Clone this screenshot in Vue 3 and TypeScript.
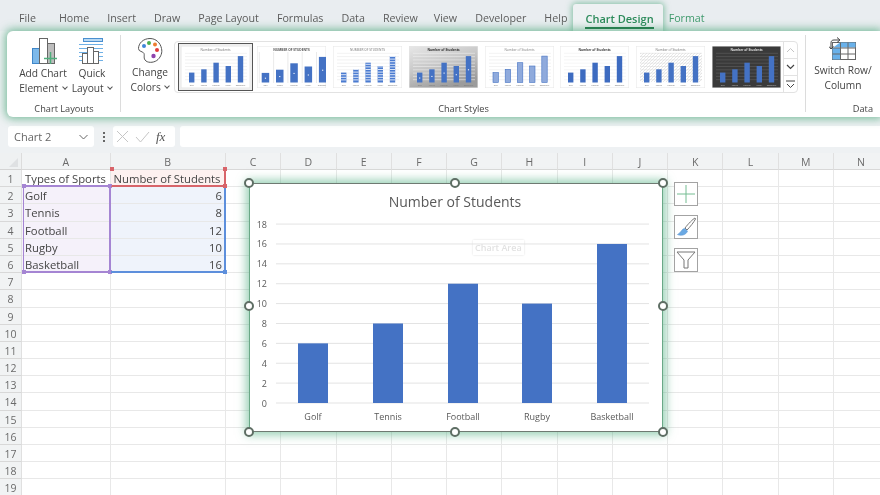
<script setup lang="ts">
interface Thumb { id: string; bg: string; grid: string; bar: string; title: string; weight: number; titleColor: string; barStroke?: string; hatch?: boolean; label?: string; vertical?: boolean; stripe?: boolean; }

const tabs = ['File', 'Home', 'Insert', 'Draw', 'Page Layout', 'Formulas', 'Data', 'Review', 'View', 'Developer', 'Help'];
const letters = ['A', 'B', 'C', 'D', 'E', 'F', 'G', 'H', 'I', 'J', 'K', 'L', 'M', 'N'];
const rows = Array.from({ length: 19 }, (_, i) => i + 1);
const table: Record<string, string> = {
  A1: 'Types of Sports', B1: 'Number of Students',
  A2: 'Golf', B2: '6', A3: 'Tennis', B3: '8', A4: 'Football', B4: '12', A5: 'Rugby', B5: '10', A6: 'Basketball', B6: '16',
};
const values = [6, 8, 12, 10, 16];
const names = ['Golf', 'Tennis', 'Football', 'Rugby', 'Basketball'];
const ticks = [0, 2, 4, 6, 8, 10, 12, 14, 16, 18];
const barX = [49, 124, 199, 273, 348];
const barCenters = [64, 139, 214, 288, 363];
const yOf = (v: number) => 220 - v * 9.94;

const thumbs: Thumb[] = [
  { id: 's1', bg: '#fff', grid: '#e4e4e4', bar: '#4472c4', title: 'Number of Students', weight: 400, titleColor: '#777' },
  { id: 's2', bg: '#fff', grid: '#d4d4d4', bar: '#4472c4', title: 'NUMBER OF STUDENTS', weight: 700, titleColor: '#555', vertical: true, label: '#fff' },
  { id: 's3', bg: '#fff', grid: '#e4e4e4', bar: '#4a7bd0', title: 'NUMBER OF STUDENTS', weight: 400, titleColor: '#777', stripe: true },
  { id: 's4', bg: 'url(#silver)', grid: '#f4f4f4', bar: '#4472c4', title: 'Number of Students', weight: 700, titleColor: '#333', label: '#fff' },
  { id: 's5', bg: '#fff', grid: '#e4e4e4', bar: '#8faadc', barStroke: '#4472c4', title: 'Number of Students', weight: 400, titleColor: '#888' },
  { id: 's6', bg: '#fff', grid: '#ececec', bar: '#3d6bc0', title: 'Number of Students', weight: 700, titleColor: '#444' },
  { id: 's7', bg: '#fff', grid: '#d8d8d8', bar: '#4472c4', title: 'Number of Students', weight: 400, titleColor: '#777', hatch: true },
  { id: 's8', bg: '#3a3a3a', grid: '#666', bar: '#4472c4', title: 'Number of Students', weight: 700, titleColor: '#ddd' },
];
const barsFor = (t: Thumb) =>
  values.map((v, i) =>
    t.vertical
      ? { x: 4.7 + i * 14.3, w: 7.5, h: v * 1.6 }
      : { x: 8 + i * 12.2, w: 5.4, h: v * 1.65 },
  );
</script>

<template>
  <div class="app">
    <nav class="tabs">
      <span v-for="t in tabs" :key="t" class="tab">{{ t }}</span>
      <span class="tab active">Chart Design</span>
      <span class="tab context">Format</span>
    </nav>

    <section class="ribbon">
      <div class="group layouts">
        <div class="tools">
          <div class="tool add">
            <svg width="30" height="28" viewBox="0 0 30 28">
              <rect x="1.5" y="11.5" width="8" height="15" fill="#7db9ea" stroke="#3f86c8" />
              <rect x="8.5" y="1.5" width="8" height="25" fill="#fff" stroke="#666" />
              <rect x="16.5" y="6.5" width="7" height="20" fill="#bdbdbd" stroke="#666" />
              <path d="M19.5 15v12M13 21.5h13" stroke="#4fae7c" stroke-width="1.5" fill="none" />
            </svg>
            <span class="label">Add Chart<br />Element <i class="caret"></i></span>
          </div>
          <div class="tool quick">
            <svg width="28" height="28" viewBox="0 0 28 28">
              <rect x="5.5" y="1.5" width="19" height="3" fill="#b9d9f3" stroke="#4a8fd0" />
              <path d="M1 7.5h24M1 11.5h24M1 15.5h24M1 19.5h24M1 23.5h24" stroke="#6fb0e6" />
              <rect x="4.5" y="16.5" width="5" height="10" fill="#fff" stroke="#666" />
              <rect x="9.5" y="10.5" width="6" height="16" fill="#fff" stroke="#666" />
              <rect x="15.5" y="14.5" width="5" height="12" fill="#fff" stroke="#666" />
            </svg>
            <span class="label">Quick<br />Layout <i class="caret"></i></span>
          </div>
        </div>
        <div class="group-name">Chart Layouts</div>
      </div>

      <div class="group styles">
        <div class="tools">
          <div class="tool colors">
            <svg width="27" height="27" viewBox="0 0 27 27">
              <path d="M13 1.5C6 1.5 1.5 6.5 1.5 11.5c0 3.5 4.5 2.5 5.5 5 .8 2.2-1 5 2 7.5 3 2.3 9 1.5 12-1.5 3-3 4.500-7 3.500-11C23.500 6 19 1.500 13 1.500z" fill="#fff" stroke="#555" />
              <circle cx="7" cy="9" r="2" fill="#3f86d8" />
              <circle cx="12" cy="6" r="2" fill="#4caf50" />
              <circle cx="18" cy="7.500" r="2" fill="#ed7d31" />
              <circle cx="20" cy="13" r="2" fill="#e03a3a" />
              <circle cx="16.500" cy="19" r="2.200" fill="#8e44ad" />
            </svg>
            <span class="label">Change<br />Colors <i class="caret"></i></span>
          </div>
          <div class="gallery">
            <div class="thumbs">
              <svg v-for="(t, n) in thumbs" :key="t.id" class="thumb" :class="{ picked: n === 0 }" width="69" height="42" viewBox="0 0 69 42">
                <defs>
                  <linearGradient id="silver" x1="0" y1="0" x2="0.5" y2="1">
                    <stop offset="0" stop-color="#e8e8e8" />
                    <stop offset="0.5" stop-color="#c8c8c8" />
                    <stop offset="1" stop-color="#9c9c9c" />
                  </linearGradient>
                  <pattern id="hatch" width="3" height="3" patternUnits="userSpaceOnUse">
                    <path d="M0 3L3 0" stroke="#d8d8d8" stroke-width="0.6" />
                  </pattern>
                </defs>
                <rect x="0" y="0" width="69" height="42" :fill="t.bg" stroke="#e6e6e6" />
                <rect v-if="t.hatch" x="4" y="7" width="62" height="29" fill="url(#hatch)" />
                <text x="34.500" y="5" class="thumb-title" :fill="t.titleColor" :font-weight="t.weight">{{ t.title }}</text>
                <template v-if="!t.vertical">
                  <path v-for="k in 9" :key="k" :d="`M4 ${4 + k * 3.300}H66`" :stroke="t.grid" stroke-width="0.5" />
                </template>
                <template v-else>
                  <path v-for="k in 6" :key="k" :d="`M${-12 + k * 14.300} 6V37`" :stroke="t.grid" stroke-width="0.5" />
                </template>
                <g v-for="(b, i) in barsFor(t)" :key="i">
                  <rect :x="b.x" :y="36.500 - b.h" :width="b.w" :height="b.h" :fill="t.bar" :stroke="t.barStroke" stroke-width="0.6" />
                  <template v-if="t.stripe">
                    <path v-for="k in Math.floor(b.h / 2.600)" :key="k" :d="`M${b.x} ${36.500 - k * 2.600}h${b.w}`" stroke="#dce6f7" stroke-width="1" />
                  </template>
                  <rect v-if="t.label" :x="b.x + b.w / 2 - 0.600" :y="36.500 - b.h / 2" width="1.200" height="1" :fill="t.label" />
                  <text :x="b.x + b.w / 2" y="40" class="thumb-cat" :fill="t.id === 's8' ? '#bbb' : '#777'">{{ names[i] }}</text>
                </g>
              </svg>
            </div>
            <div class="spin">
              <span class="spin-btn"><svg width="9" height="6" viewBox="0 0 9 6"><path d="M1 5l3.500-3.500L8 5" fill="none" stroke="#c4c4c4" /></svg></span>
              <span class="spin-btn"><svg width="9" height="6" viewBox="0 0 9 6"><path d="M1 1l3.500 3.500L8 1" fill="none" stroke="#444" stroke-width="1.200" /></svg></span>
              <span class="spin-btn"><svg width="9" height="9" viewBox="0 0 9 9"><path d="M0 1h9M1 4l3.500 3.500L8 4" fill="none" stroke="#444" /></svg></span>
            </div>
          </div>
        </div>
        <div class="group-name">Chart Styles</div>
      </div>

      <div class="group data">
        <div class="tools">
          <div class="tool switch">
            <svg width="28" height="26" viewBox="0 0 28 26">
              <rect x="3.500" y="6.500" width="23" height="17" fill="#fff" stroke="#666" />
              <path d="M11 6.500h15.500v5H3.500V12z" fill="#69b1ea" />
              <rect x="3.500" y="12" width="8" height="6" fill="#69b1ea" />
              <rect x="3.500" y="18" width="8" height="5.500" fill="#69b1ea" />
              <path d="M3.500 12h23M3.500 18h23M11.500 6.500v17M19 6.500v17" stroke="#666" fill="none" />
              <path d="M2 13V7c0-2 1-3 3-3h5" fill="none" stroke="#444" />
              <path d="M8 1.500L11 4 8 6.500M0 10.500l2 2.500 2.500-2.500" fill="none" stroke="#444" />
            </svg>
            <span class="label">Switch Row/<br />Column</span>
          </div>
        </div>
        <div class="group-name right">Data</div>
      </div>
    </section>

    <div class="formula">
      <div class="namebox">
        <span>Chart 2</span>
        <svg width="9" height="6" viewBox="0 0 9 6"><path d="M.5 1l4 4 4-4" fill="none" stroke="#666" /></svg>
      </div>
      <span class="dots"></span>
      <div class="fxbox">
        <svg width="13" height="13" viewBox="0 0 13 13"><path d="M1 1l11 11M12 1L1 12" stroke="#c6c6c6" fill="none" /></svg>
        <svg width="15" height="12" viewBox="0 0 15 12"><path d="M1 6l4.500 5L14 1" stroke="#c6c6c6" fill="none" /></svg>
        <em>fx</em>
      </div>
      <div class="input"></div>
    </div>

    <div class="sheet">
      <div class="grid">
        <div class="corner" style="grid-row: 1; grid-column: 1"><i></i></div>
        <div v-for="(l, c) in letters" :key="l" class="col-head" :style="{ gridRow: 1, gridColumn: c + 2 }">{{ l }}</div>
        <template v-for="r in rows" :key="r">
          <div class="row-head" :style="{ gridRow: r + 1, gridColumn: 1 }">{{ r }}</div>
          <div
            v-for="(l, c) in letters"
            :key="l"
            class="cell"
            :class="{
              num: l === 'B' && r > 1,
              purple: l === 'A' && r > 1 && r < 7,
              blue: l === 'B' && r > 1 && r < 7,
              red: l === 'B' && r === 1,
            }"
            :style="{ gridRow: r + 1, gridColumn: c + 2 }"
          >{{ table[l + r] }}</div>
        </template>
        <div class="range range-a"><i class="knob tl"></i><i class="knob bl"></i><i class="knob tr"></i><i class="knob br"></i></div>
        <div class="range range-b"><i class="knob br"></i></div>
        <div class="range range-c"><i class="knob tl"></i><i class="knob tr"></i><i class="knob br"></i></div>
      </div>

      <div class="chart">
        <svg class="plot" width="414" height="249" viewBox="0 0 414 249">
          <text x="206" y="24" class="chart-title">Number of Students</text>
          <g v-for="t in ticks" :key="t">
            <path :d="`M27 ${yOf(t)}H400`" stroke="#e3e3e3" stroke-width="1" />
            <text x="18" :y="yOf(t) + 3.500" class="tick">{{ t }}</text>
          </g>
          <rect v-for="(v, i) in values" :key="i" :x="barX[i]" :y="yOf(v)" width="30" :height="v * 9.94" fill="#4472c4" />
          <text v-for="(n, i) in names" :key="n" :x="barCenters[i]" y="237" class="cat">{{ n }}</text>
        </svg>
        <div class="ghost">Chart Area</div>
        <i class="handle h1"></i><i class="handle h2"></i><i class="handle h3"></i><i class="handle h4"></i>
        <i class="handle h5"></i><i class="handle h6"></i><i class="handle h7"></i><i class="handle h8"></i>
      </div>

      <div class="float-tools">
        <span class="float">
          <svg width="22" height="22" viewBox="0 0 22 22"><path d="M11 2v18M2 11h18" stroke="#74bd92" stroke-width="1" fill="none" /></svg>
        </span>
        <span class="float">
          <svg width="22" height="22" viewBox="0 0 22 22">
            <path d="M20 2c-2 1-7 6-10 10l2 2c3-3 7-8 8.500-11z" fill="#fff" stroke="#777" />
            <path d="M9.500 12.500c-3 .5-3 4-7 6 3 1.500 8.500 1 10-3.500z" fill="#6aa9e4" stroke="#5b96d0" stroke-width=".6" />
          </svg>
        </span>
        <span class="float">
          <svg width="22" height="22" viewBox="0 0 22 22"><path d="M2 3h18l-7 8v8H9v-8z" fill="#fff" stroke="#777" /></svg>
        </span>
      </div>
    </div>
  </div>
</template>

<style>
html, body { margin: 0; background: #fff; }
</style>

<style scoped>
.app {
  width: 880px;
  height: 495px;
  overflow: hidden;
  position: relative;
  display: flex;
  flex-direction: column;
  background: #eef1f3;
  font-family: "Open Sans", "Noto Sans", sans-serif;
  color: #444;
  filter: blur(0.4px);
}
.tabs {
  height: 31px;
  flex: none;
  box-sizing: border-box;
  display: flex;
  align-items: flex-start;
  padding: 4px 0 0 10px;
  background: #e9edf0;
  font-size: 10.7px;
  color: #5c5c5c;
}
.tab { padding: 7px 9px 0; height: 27px; box-sizing: border-box; line-height: 15px; white-space: nowrap; }
.tab:first-child { margin-right: 5px; }
.tab:nth-child(8) { margin-right: -2px; }
.tab.active {
  margin-left: -3px;
  padding: 7px 9px 0 12px;
  font-size: 11px;
  font-weight: 600;
  color: #2b8a5a;
  background: #eef1f3;
  box-shadow: 0 0 6px 1px rgba(60, 160, 110, 0.6);
  border-radius: 3px 3px 0 0;
  position: relative;
}
.tab.active::after {
  content: "";
  position: absolute;
  left: 12px;
  right: 9px;
  bottom: 2px;
  height: 2px;
  background: #217346;
}
.tab.context { color: #3f9a6c; margin-left: -3px; }
.ribbon {
  height: 86px;
  flex: none;
  margin-left: 7px;
  display: flex;
  background: #fff;
  border-radius: 6px 0 0 6px;
  box-shadow: 0 0 8px 2px rgba(60, 160, 110, 0.65);
  position: relative;
}
.group { display: flex; flex-direction: column; height: 100%; position: relative; }
.group::after {
  content: "";
  position: absolute;
  right: 0;
  top: 4px;
  bottom: 5px;
  width: 1px;
  background: #dcdcdc;
}
.group.data::after { display: none; }
.layouts { width: 114px; }
.styles { width: 685px; }
.data { width: 74px; }
.tools { flex: 1; display: flex; align-items: flex-start; min-height: 0; }
.tool { display: flex; flex-direction: column; align-items: center; padding-top: 6px; }
.tool svg { flex: none; }
.label {
  font-size: 10.2px;
  line-height: 15px;
  text-align: center;
  color: #444;
  margin-top: 1px;
  white-space: nowrap;
}
.add { width: 68px; margin-left: 2px; }
.add svg { margin-left: 5px; }
.quick { width: 36px; margin-left: -3px; }
.colors { width: 52px; margin-left: 3px; }
.colors svg { margin-left: 1px; }
.caret {
  display: inline-block;
  width: 3px;
  height: 3px;
  border-right: 1px solid #555;
  border-bottom: 1px solid #555;
  transform: rotate(45deg);
  margin: 0 0 3px 2px;
}
.group-name {
  font-size: 9.2px;
  line-height: 14px;
  text-align: center;
  padding-bottom: 1px;
  color: #444;
}
.group-name.right { text-align: right; padding-right: 7px; }
.gallery {
  margin-top: 10px;
  height: 50px;
  display: flex;
  margin-left: -2px;
  border: 1px solid #e2e2e2;
  border-radius: 4px;
  box-sizing: content-box;
}
.thumbs { display: flex; gap: 6.9px; width: 608px; padding: 4px 0 0 6px; box-sizing: border-box; height: 100%; }
.thumb { flex: none; }
.thumb.picked { outline: 1px solid #555; outline-offset: 2px; box-shadow: 0 0 0 3px #eee; }
.thumb-title { font-size: 3.2px; text-anchor: middle; }
.thumb-cat { font-size: 2px; text-anchor: middle; }
.spin {
  width: 13px;
  display: flex;
  flex-direction: column;
  border-left: 1px solid #e2e2e2;
}
.spin-btn { flex: 1; display: flex; align-items: center; justify-content: center; border-bottom: 1px solid #e2e2e2; }
.spin-btn:last-child { border-bottom: 0; }
.switch { width: 76px; padding-top: 5px; }
.formula {
  height: 36px;
  flex: none;
  box-sizing: border-box;
  display: flex;
  align-items: center;
  padding: 3px 0 0 8px;
}
.namebox {
  width: 86px;
  height: 21px;
  box-sizing: border-box;
  background: #fff;
  border-radius: 3px;
  display: flex;
  align-items: center;
  justify-content: space-between;
  padding: 0 6px;
  font-size: 11px;
  color: #666;
}
.dots {
  width: 2px;
  height: 2px;
  background: #666;
  margin: 0 8px 0 9px;
  box-shadow: 0 -4px 0 #666, 0 4px 0 #666;
}
.fxbox {
  width: 62px;
  height: 21px;
  box-sizing: border-box;
  background: #fff;
  border-radius: 3px;
  display: flex;
  align-items: center;
  gap: 6px;
  padding: 0 3px;
}
.fxbox em { font-family: "Liberation Serif", serif; font-size: 13px; color: #555; }
.input { flex: 1; height: 21px; background: #fff; border-radius: 3px 0 0 3px; margin-left: 5px; }
.sheet { flex: 1; position: relative; background: #fff; }
.grid {
  display: grid;
  grid-template-columns: 22px 88.5px 115.5px repeat(12, 55.25px);
  grid-template-rows: 17px repeat(19, 17.2px);
}
.corner { background: #eff1f2; border-right: 1px solid #dcdcdc; border-bottom: 1px solid #d4d4d4; position: relative; box-sizing: border-box; }
.corner i {
  position: absolute;
  right: 3px;
  bottom: 2px;
  border-left: 9px solid transparent;
  border-bottom: 9px solid #dfe1e3;
}
.col-head, .row-head {
  background: #f1f3f4;
  color: #6a6a6a;
  font-size: 10.5px;
  text-align: center;
  box-sizing: border-box;
  line-height: 18px;
  border-right: 1px solid #e0e0e0;
  border-bottom: 1px solid #d8d8d8;
}
.cell {
  box-sizing: border-box;
  border-right: 1px solid #e8e8e8;
  border-bottom: 1px solid #e8e8e8;
  font-size: 11.3px;
  line-height: 18px;
  padding: 0 3px;
  color: #454545;
  white-space: nowrap;
  overflow: hidden;
}
.cell.num { text-align: right; }
.cell.purple { background: #f5f1fa; }
.cell.blue { background: #eff3fb; }
.cell.red { background: #fdf1f0; }
.range { box-sizing: border-box; position: relative; z-index: 1; }
.range-a {
  grid-column: 2;
  grid-row: 3 / 8;
  border-left: 1px solid #a585d3;
  border-right: 2px solid #a585d3;
  border-top: 2px solid #a585d3;
  border-bottom: 2px solid #a585d3;
  margin-top: -2px;
  margin-left: 1px;
}
.range-b {
  grid-column: 3;
  grid-row: 3 / 8;
  border-right: 2px solid #5d8fdc;
  border-bottom: 2px solid #5d8fdc;
  margin-top: -1px;
}
.range-c {
  grid-column: 3;
  grid-row: 2;
  border-left: 1px solid transparent;
  border-right: 2px solid #d8646a;
  border-bottom: 2px solid #d8646a;
}
.knob { position: absolute; width: 4px; height: 4px; }
.range-a .knob { background: #a585d3; }
.range-b .knob { background: #5d8fdc; }
.range-c .knob { background: #d8646a; }
.knob.tl { left: -2px; top: -3px; }
.knob.tr { right: -3px; top: -3px; }
.knob.bl { left: -2px; bottom: -3px; }
.knob.br { right: -3px; bottom: -3px; }
.chart {
  position: absolute;
  left: 249px;
  top: 30px;
  width: 414px;
  height: 249px;
  box-sizing: border-box;
  background: #fff;
  border-top: 1.5px solid #6e7a72;
  border-bottom: 1.5px solid #6e7a72;
  border-left: 1.5px solid #6aa887;
  border-right: 1.5px solid #6aa887;
  box-shadow: 0 0 9px 3px rgba(70, 170, 120, 0.55);
}
.plot { position: absolute; left: -1.5px; top: -1.5px; }
.chart-title { font-size: 14px; fill: #595959; text-anchor: middle; }
.tick { font-size: 9px; fill: #595959; text-anchor: end; }
.cat { font-size: 9px; fill: #595959; text-anchor: middle; }
.ghost {
  position: absolute;
  left: 223px;
  top: 56px;
  padding: 1px 2px;
  font-size: 9px;
  line-height: 13px;
  font-weight: 600;
  color: #e2e2e2;
  box-shadow: 0 0 2px #ddd;
}
.handle {
  position: absolute;
  width: 10px;
  height: 10px;
  box-sizing: border-box;
  border: 2px solid #5e6e64;
  border-radius: 50%;
  background: #fff;
}
.h1 { left: -6px; top: -6px; }
.h2 { left: 200px; top: -6px; }
.h3 { right: -6px; top: -6px; }
.h4 { left: -6px; top: 117px; }
.h5 { right: -6px; top: 117px; }
.h6 { left: -6px; bottom: -6px; }
.h7 { left: 200px; bottom: -6px; }
.h8 { right: -6px; bottom: -6px; }
.float-tools {
  position: absolute;
  left: 674px;
  top: 29px;
  display: flex;
  flex-direction: column;
  gap: 9px;
}
.float {
  width: 24px;
  height: 24px;
  box-sizing: border-box;
  background: #fff;
  border: 1px solid #a3a3a3;
  display: flex;
  align-items: center;
  justify-content: center;
}
</style>
